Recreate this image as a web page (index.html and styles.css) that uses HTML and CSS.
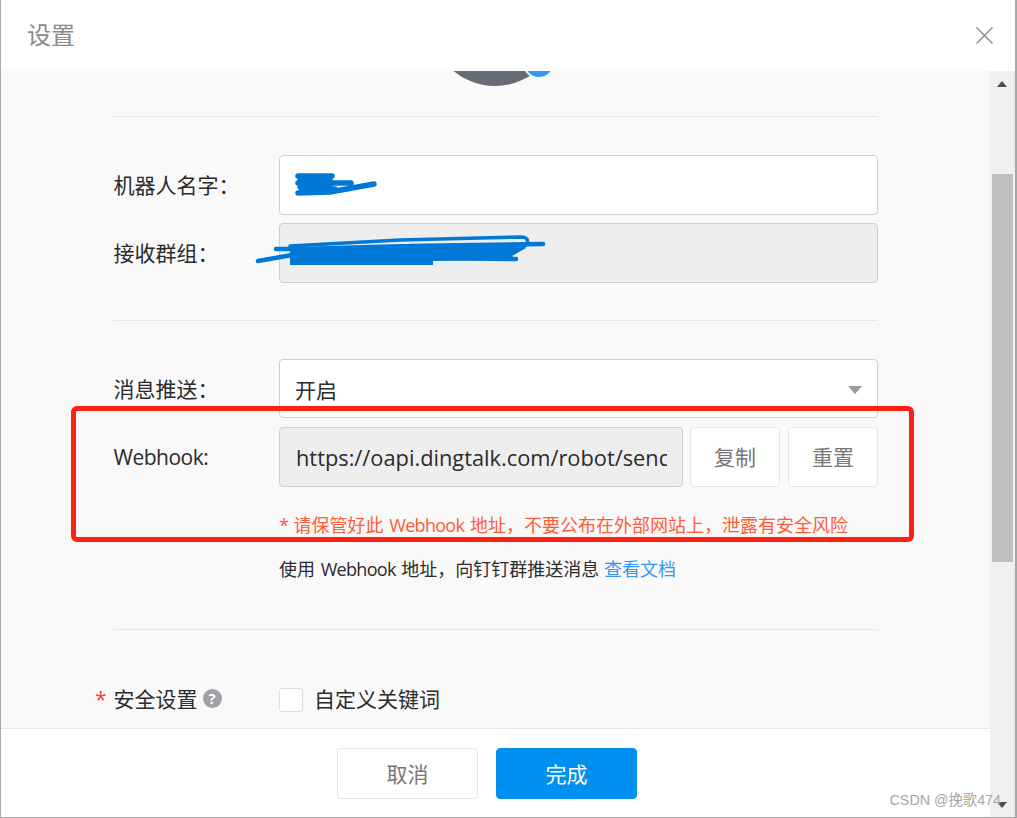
FILE: index.html
```html
<!DOCTYPE html>
<html lang="zh-CN">
<head>
<meta charset="utf-8">
<title>设置</title>
<link rel="stylesheet" href="styles.css">
</head>
<body>
<div class="window">
  <header class="head">
    <h1 class="title">设置</h1>
    <svg class="close" width="17" height="17" viewBox="0 0 17 17"><path d="M.5 .5L16.500 16.500M16.500 .5L.5 16.500" fill="none" stroke="#8a8a8a" stroke-width="1.4"/></svg>
  </header>
  <div class="lower">
    <div class="col">
      <main class="content">
        <div class="avatar"><span class="dot"></span></div>
        <hr class="rule rule-1">
        <div class="row row-first">
          <label class="label">机器人名字：</label>
          <div class="field field-white">
            <svg class="scribble" width="100" height="40" viewBox="0 0 100 40"><path d="M18 20L52 20M18 27L71 27M18 37L50 36L94 28M20 24L50 24M20 31L50 31M22 34L55 33" fill="none" stroke="#0078d7" stroke-width="5.500" stroke-linecap="round" stroke-linejoin="round"/></svg>
          </div>
        </div>
        <div class="row row-tight">
          <label class="label">接收群组：</label>
          <div class="field field-grey">
            <svg class="scribble" width="300" height="44" viewBox="0 0 300 44"><path d="M10 22L120 16L240 13C250 13 250 20 240 25L180 30" fill="none" stroke="#0078d7" stroke-width="3.500" stroke-linecap="round" stroke-linejoin="round"/><path d="M-4 25H12M130 22L263 20M-22 37L12 31M160 34L236 35" fill="none" stroke="#0078d7" stroke-width="4.500" stroke-linecap="round"/><path d="M10 23L120 20L240 20L246 24L232 32L237 36L153 37V41H10Z" fill="#0078d7"/></svg>
          </div>
        </div>
        <hr class="rule rule-2">
        <div class="row row-select">
          <label class="label">消息推送：</label>
          <div class="field field-white field-select"><span class="select-value">开启</span><span class="caret"></span></div>
        </div>
        <div class="row row-hook">
          <label class="label label-hook"><span class="hook-word">Webhook</span>:</label>
          <div class="hook">
            <div class="field field-grey hook-url"><span class="url">https://oapi.dingtalk.com/robot/send</span></div>
            <button class="btn btn-small">复制</button>
            <button class="btn btn-small">重置</button>
          </div>
        </div>
        <p class="warn">* 请保管好此 <span class="latin">Webhook</span> 地址，不要公布在外部网站上，泄露有安全风险</p>
        <p class="hint">使用 <span class="latin">Webhook</span> 地址，向钉钉群推送消息 <a class="link">查看文档</a></p>
        <hr class="rule rule-3">
        <div class="row row-safe">
          <label class="label label-safe"><span class="star">*</span>安全设置<span class="help">?</span></label>
          <div class="check"><span class="box"></span><span>自定义关键词</span></div>
        </div>
      </main>
      <footer class="foot">
        <button class="btn btn-foot">取消</button>
        <button class="btn btn-foot btn-primary">完成</button>
      </footer>
    </div>
    <div class="scrollbar">
      <span class="arrow arrow-up"></span>
      <span class="thumb"></span>
      <span class="arrow arrow-down"></span>
    </div>
  </div>
  <div class="redbox"></div>
  <div class="mark">CSDN @挽歌474</div>
</div>
</body>
</html>
```

FILE: styles.css
```css
* { box-sizing: border-box; }
html, body { margin: 0; padding: 0; }
body {
  width: 1017px;
  height: 818px;
  overflow: hidden;
  background: #fff;
  color: #2b2b2b;
  font-family: "Open Sans", "Noto Sans CJK SC", sans-serif;
  font-size: 21px;
}
.window {
  position: relative;
  width: 1017px;
  height: 818px;
  display: flex;
  flex-direction: column;
  border-left: 1px solid #a8a8a8;
  border-right: 2px solid #a8a8a8;
  border-bottom: 1px solid #a8a8a8;
  background: #fff;
}
.head {
  height: 71px;
  flex: none;
  display: flex;
  align-items: center;
  justify-content: space-between;
  padding: 0 22px 0 26px;
}
.title {
  margin: 0 0 4px;
  font-size: 24px;
  font-weight: 400;
  color: #8a8a8a;
}
.lower { flex: 1; display: flex; min-height: 0; }
.col { width: 989px; display: flex; flex-direction: column; }
.content {
  height: 657px;
  overflow: hidden;
  background: #f9f9f9;
  padding: 0 112px;
}
.avatar {
  position: relative;
  width: 130px;
  height: 130px;
  margin: -115px auto 0;
  left: -1px;
  border-radius: 50%;
  background: #666c72;
}
.dot {
  position: absolute;
  right: 5px;
  bottom: 7px;
  width: 32px;
  height: 32px;
  border-radius: 50%;
  background: #3296fa;
  border: 2px solid #f9f9f9;
}
.rule { height: 1px; border: 0; margin: 0; background: #e6e6e6; }
.rule-1 { margin-top: 30px; }
.rule-2 { margin-top: 37px; }
.rule-3 { margin-top: 47px; }
.row { display: flex; align-items: center; }
.row-first { margin-top: 38px; }
.row-tight { margin-top: 8px; }
.row-select { margin-top: 38px; }
.row-hook { margin-top: 9px; }
.row-safe { margin-top: 53px; align-items: flex-start; }
.label { width: 166px; flex: none; padding: 0 0 2px 0.500px; color: #2b2b2b; }
.label-hook { padding-bottom: 0; }
.hook-word { letter-spacing: -0.500px; }
.field {
  position: relative;
  width: 599px;
  height: 60px;
  border: 1px solid #cfcfcf;
  border-radius: 4px;
}
.field-white { background: #fff; }
.field-grey { background: #eeeeee; }
.scribble { position: absolute; left: 0; top: 0; overflow: visible; }
.field-select {
  height: 59px;
  display: flex;
  align-items: center;
  justify-content: space-between;
  padding: 0 15px;
}
.caret {
  width: 0;
  height: 0;
  margin-top: 3px;
  border-left: 7.500px solid transparent;
  border-right: 7.500px solid transparent;
  border-top: 8px solid #9b9b9b;
}
.hook { display: flex; width: 599px; }
.hook-url {
  width: 404px;
  flex: none;
  margin-right: 7px;
  padding: 0 15px 0 16px;
  display: flex;
  align-items: center;
}
.url {
  display: block;
  width: 100%;
  overflow: hidden;
  white-space: nowrap;
  font-size: 21.800px;
  color: #2b2b2b;
}
.btn {
  font-family: inherit;
  font-size: 21px;
  color: #777;
  background: #fff;
  border: 1px solid #e6e6e6;
  border-radius: 4px;
  padding: 0 0 2px;
}
.btn-small { width: 90px; height: 60px; margin-right: 8px; }
.btn-small:last-child { margin-right: 0; }
.warn { margin: 25px 0 0 166px; height: 26px; font-size: 18px; line-height: 26px; color: #ff5c38; white-space: nowrap; }
.hint { margin: 18px 0 0 166px; height: 26px; font-size: 18px; line-height: 26px; color: #2b2b2b; white-space: nowrap; }
.latin { letter-spacing: -0.700px; margin: 0 1px; }
.link { color: #3296fa; }
.label-safe { position: relative; display: flex; align-items: flex-start; padding-bottom: 0; }
.star { position: absolute; left: -18px; top: 2px; color: #f5424a; }
.help {
  margin: 6px 0 0 5px;
  width: 19px;
  height: 19px;
  border-radius: 50%;
  background: #9ea1a6;
  color: #fff;
  font-size: 15px;
  font-weight: 700;
  line-height: 19px;
  text-align: center;
}
.check { display: flex; align-items: flex-start; }
.box {
  width: 24px;
  height: 24px;
  margin: 5px 11px 0 0;
  background: #fff;
  border: 1px solid #dcdcdc;
  border-radius: 3px;
}
.foot {
  flex: 1;
  background: #fff;
  border-top: 1px solid #e6e6e6;
  display: flex;
  padding: 19px 0 0 336px;
  align-items: flex-start;
}
.btn-foot { width: 141px; height: 51px; margin-right: 18px; }
.btn-primary { background: #0090f0; border-color: #0090f0; color: #fff; }
.scrollbar {
  position: relative;
  width: 25px;
  flex: none;
  background: #f0f0f0;
}
.thumb {
  position: absolute;
  left: 2px;
  top: 103px;
  width: 21px;
  height: 388px;
  background: #bfbfbf;
}
.arrow { position: absolute; left: 7px; width: 0; height: 0; border-left: 5.500px solid transparent; border-right: 5.500px solid transparent; }
.arrow-up { top: 10px; border-bottom: 6px solid #4d4d4d; }
.arrow-down { bottom: 9px; border-top: 6px solid #4d4d4d; }
.redbox {
  position: absolute;
  left: 70px;
  top: 406px;
  width: 843px;
  height: 136px;
  border: 5px solid #ff2012;
  border-radius: 6px;
}
.mark {
  position: absolute;
  right: 14px;
  bottom: 8px;
  font-family: "Liberation Sans", "Noto Sans CJK SC", sans-serif;
  font-size: 14.300px;
  color: #a6a6a6;
}
```
